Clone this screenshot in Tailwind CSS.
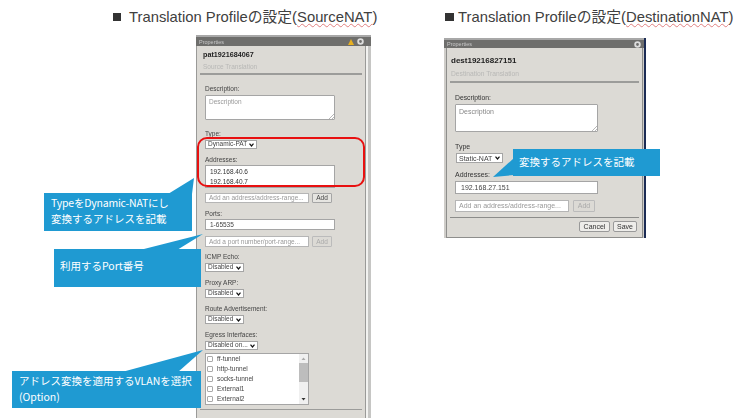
<!DOCTYPE html>
<html lang="ja">
<head>
    <meta charset="UTF-8">
    <title>Translation Profile</title>
    <script src="https://cdn.jsdelivr.net/npm/@tailwindcss/browser@4"></script>
</head>
<body class="bg-white">
<div class="relative w-[750px] h-[418px] overflow-hidden bg-white font-['Liberation_Sans','Noto_Sans_CJK_JP',sans-serif]">

    <!-- slide headings -->
    <h2 class="absolute left-[113px] top-[7px] flex items-center text-[14.8px] leading-[20px] font-normal text-[#404040] whitespace-nowrap">
        <span class="w-[8px] h-[8px] bg-[#333] mr-[8px]"></span>
        <span>Translation Profileの設定(<span class="underline decoration-wavy decoration-[#e08080] decoration-[0.5px]">SourceNAT</span>)</span>
    </h2>
    <h2 class="absolute left-[445px] top-[7px] flex items-center text-[14.8px] leading-[20px] font-normal text-[#404040] whitespace-nowrap">
        <span class="w-[9px] h-[8px] bg-[#333] mr-[4px]"></span>
        <span>Translation Profileの設定(<span class="underline decoration-wavy decoration-[#e08080] decoration-[0.5px]">DestinationNAT</span>)</span>
    </h2>

    <!-- source nat panel -->
    <div class="absolute left-[196px] top-[35px] w-[175px] h-[383px] flex flex-col blur-[0.3px] text-[6.5px] leading-[10px] text-[#444] whitespace-nowrap">
        <div class="h-[11px] shrink-0 border-t-2 border-[#a8a8a8] bg-[#6e6e6c] flex items-center pl-[3px] pr-[7px] text-[5.5px] text-[#c8c8c8]">
            <span class="flex-1">Properties</span>
            <svg class="w-[6px] h-[6px] mr-[3px]" viewBox="0 0 6 6"><path d="M3 0 L6 6 L0 6 Z" fill="#e8b020"/></svg>
            <svg class="w-[7px] h-[7px]" viewBox="0 0 6 6"><circle cx="3" cy="3" r="2" fill="none" stroke="#ddd" stroke-width="1.6"/></svg>
        </div>
        <div class="flex flex-1 min-h-0">
            <div class="w-[170px] h-full bg-[#dcdad5] border-x border-[#9a9a98] overflow-hidden">
                <div class="px-[3px]">
                    <div class="pl-[3px] mt-[4px] h-[10px] text-[7.2px] font-bold text-[#222]">pat1921684067</div>
                    <div class="pl-[3px] mt-[2px] h-[10px] text-[#b8b8b6]">Source Translation</div>
                    <div class="mt-[1px] h-[2px] bg-[#9c9c9a]"></div>
                </div>
                <div class="pl-[8px]">
                    <div class="mt-[9px] h-[10px]">Description:</div>
                    <div class="relative mt-[1px] w-[130px] h-[25px] bg-white border border-[#a5a5a5] rounded-[1px] px-[3px] pt-[1px] text-[#999]">
                        Description
                        <svg class="absolute right-0 bottom-0 w-[5px] h-[5px]" viewBox="0 0 5 5"><path d="M0 5 L5 0 M3 5 L5 3" stroke="#888" stroke-width="0.6"/></svg>
                    </div>
                    <div class="mt-[9px] h-[10px]">Type:</div>
                    <div class="mt-[1px] w-[52px] h-[9px] bg-white border border-[#a5a5a5] flex items-center justify-between px-[2px] leading-none">Dynamic-PAT
                        <svg class="w-[5px] h-[4px]" viewBox="0 0 5 4"><path d="M0.5 0.7 L2.5 3 L4.5 0.7" fill="none" stroke="#111" stroke-width="1.2"/></svg>
                    </div>
                    <div class="mt-[6px] h-[10px]">Addresses:</div>
                    <div class="w-[130px] h-[23px] bg-white border border-[#a5a5a5] pl-[4px] pt-[1px] text-[#333]">
                        <div>192.168.40.6</div>
                        <div>192.168.40.7</div>
                    </div>
                    <div class="mt-[5px] flex gap-[3px]">
                        <div class="w-[104px] h-[10px] bg-white border border-[#b5b5b5] px-[3px] leading-[8px] text-[#999]">Add an address/address-range...</div>
                        <div class="w-[20px] h-[10px] bg-[#e6e5e1] border border-[#a5a5a5] rounded-[1px] text-center leading-[8px]">Add</div>
                    </div>
                    <div class="mt-[6px] h-[10px]">Ports:</div>
                    <div class="w-[130px] h-[11px] bg-white border border-[#a5a5a5] px-[4px] leading-[9px]">1-65535</div>
                    <div class="mt-[6px] flex gap-[3px]">
                        <div class="w-[104px] h-[11px] bg-white border border-[#b5b5b5] px-[3px] leading-[9px] text-[#999]">Add a port number/port-range...</div>
                        <div class="w-[20px] h-[11px] bg-[#dcdad5] border border-[#bbb] rounded-[1px] text-center leading-[9px] text-[#aaa]">Add</div>
                    </div>
                    <div class="mt-[5px] h-[10px]">ICMP Echo:</div>
                    <div class="mt-[1px] w-[39px] h-[9px] bg-white border border-[#a5a5a5] flex items-center justify-between px-[2px] leading-none">Disabled
                        <svg class="w-[5px] h-[4px]" viewBox="0 0 5 4"><path d="M0.5 0.7 L2.5 3 L4.5 0.7" fill="none" stroke="#111" stroke-width="1.2"/></svg>
                    </div>
                    <div class="mt-[6px] h-[10px]">Proxy ARP:</div>
                    <div class="mt-[1px] w-[39px] h-[9px] bg-white border border-[#a5a5a5] flex items-center justify-between px-[2px] leading-none">Disabled
                        <svg class="w-[5px] h-[4px]" viewBox="0 0 5 4"><path d="M0.5 0.7 L2.5 3 L4.5 0.7" fill="none" stroke="#111" stroke-width="1.2"/></svg>
                    </div>
                    <div class="mt-[6px] h-[10px]">Route Advertisement:</div>
                    <div class="mt-[1px] w-[39px] h-[9px] bg-white border border-[#a5a5a5] flex items-center justify-between px-[2px] leading-none">Disabled
                        <svg class="w-[5px] h-[4px]" viewBox="0 0 5 4"><path d="M0.5 0.7 L2.5 3 L4.5 0.7" fill="none" stroke="#111" stroke-width="1.2"/></svg>
                    </div>
                    <div class="mt-[6px] h-[10px]">Egress Interfaces:</div>
                    <div class="mt-[1px] w-[53px] h-[9px] bg-white border border-[#a5a5a5] flex items-center justify-between px-[2px] leading-none">Disabled on...
                        <svg class="w-[5px] h-[4px]" viewBox="0 0 5 4"><path d="M0.5 0.7 L2.5 3 L4.5 0.7" fill="none" stroke="#111" stroke-width="1.2"/></svg>
                    </div>
                    <div class="mt-[3px] w-[104px] h-[52px] bg-white border border-[#a5a5a5] flex">
                        <div class="flex-1 pl-[1px] flex flex-col">
                            <div class="h-[10.4px] flex items-center gap-[4px]"><span class="w-[6px] h-[6px] border border-[#aaa] rounded-[1px]"></span>ff-tunnel</div>
                            <div class="h-[10.4px] flex items-center gap-[4px]"><span class="w-[6px] h-[6px] border border-[#aaa] rounded-[1px]"></span>http-tunnel</div>
                            <div class="h-[10.4px] flex items-center gap-[4px]"><span class="w-[6px] h-[6px] border border-[#aaa] rounded-[1px]"></span>socks-tunnel</div>
                            <div class="h-[10.4px] flex items-center gap-[4px]"><span class="w-[6px] h-[6px] border border-[#aaa] rounded-[1px]"></span>External1</div>
                            <div class="h-[10.4px] flex items-center gap-[4px]"><span class="w-[6px] h-[6px] border border-[#aaa] rounded-[1px]"></span>External2</div>
                        </div>
                        <div class="w-[9px] bg-[#f0f0f0] flex flex-col items-center">
                            <svg class="w-[5px] h-[9px]" viewBox="0 0 5 9"><path d="M0.5 6 L2.5 3.5 L4.5 6 Z" fill="#aaa"/></svg>
                            <div class="w-full h-[19px] bg-[#bdbdbd]"></div>
                            <div class="flex-1"></div>
                            <svg class="w-[5px] h-[9px]" viewBox="0 0 5 9"><path d="M0.5 3 L2.5 5.5 L4.5 3 Z" fill="#333"/></svg>
                        </div>
                    </div>
                </div>
                <div class="mt-[4px] mx-[3px] h-px bg-[#9c9c9a]"></div>
            </div>
            <div class="w-[2px] h-full bg-[#f2f2f0]"></div>
            <div class="w-[3px] h-full bg-[#c6c6c4]"></div>
        </div>
    </div>

    <!-- destination nat panel -->
    <div class="absolute left-[444px] top-[38px] w-[202px] h-[200px] flex flex-col blur-[0.3px] bg-[#cfcdc9] border-r-2 border-[#1c2c55] text-[7px] leading-[10px] text-[#444] whitespace-nowrap">
        <div class="h-[10px] shrink-0 border-t-2 border-[#a8a8a8] bg-[#6e6e6c] flex items-center justify-between px-[3px] text-[5.5px] text-[#c8c8c8]">
            <span>Properties</span>
            <svg class="w-[7px] h-[7px]" viewBox="0 0 6 6"><circle cx="3" cy="3" r="2" fill="none" stroke="#ddd" stroke-width="1.6"/></svg>
        </div>
        <div class="flex-1 ml-[2px] mr-[1px] bg-[#dcdad5] border-x border-b border-[#8e8e8c]">
            <div class="px-[3px]">
                <div class="pl-[1px] mt-[8px] h-[10px] text-[8px] font-bold text-[#222]">dest19216827151</div>
                <div class="pl-[1px] mt-[3px] h-[10px] text-[6.7px] text-[#b8b8b6]">Destination Translation</div>
                <div class="mt-[2px] h-[2px] bg-[#9c9c9a]"></div>
            </div>
            <div class="pl-[8px]">
                <div class="mt-[10px] h-[10px] text-[6.8px] text-[#333]">Description:</div>
                <div class="relative mt-[1px] w-[143px] h-[28px] bg-white border border-[#a5a5a5] rounded-[1px] px-[3px] pt-[2px] text-[#888]">
                    Description
                    <svg class="absolute right-0 bottom-0 w-[5px] h-[5px]" viewBox="0 0 5 5"><path d="M0 5 L5 0 M3 5 L5 3" stroke="#888" stroke-width="0.6"/></svg>
                </div>
                <div class="mt-[10px] h-[10px] text-[#333]">Type</div>
                <div class="mt-[1px] ml-px w-[47px] h-[10px] bg-white border border-[#a5a5a5] flex items-center justify-between px-[2px] leading-none">Static-NAT
                    <svg class="w-[5px] h-[4px]" viewBox="0 0 5 4"><path d="M0.5 0.7 L2.5 3 L4.5 0.7" fill="none" stroke="#111" stroke-width="1.2"/></svg>
                </div>
                <div class="mt-[7px] h-[10px] text-[#333]">Addresses:</div>
                <div class="mt-px w-[143px] h-[13px] bg-white border border-[#a5a5a5] px-[5px] leading-[11px]">192.168.27.151</div>
                <div class="mt-[6px] flex gap-[4px]">
                    <div class="w-[114px] h-[12px] bg-white border border-[#b5b5b5] px-[3px] leading-[10px] text-[#999]">Add an address/address-range...</div>
                    <div class="w-[22px] h-[12px] bg-[#dcdad5] border border-[#bbb] rounded-[1px] text-center leading-[10px] text-[#aaa]">Add</div>
                </div>
            </div>
            <div class="mt-[5px] mx-[3px] h-px bg-[#8c8c8a]"></div>
            <div class="mt-[3px] mr-[5px] flex justify-end gap-[3px] text-[#333]">
                <div class="w-[31px] h-[11px] bg-[#eeedea] border border-[#999] rounded-[2px] text-center leading-[9px]">Cancel</div>
                <div class="w-[24px] h-[11px] bg-[#eeedea] border border-[#999] rounded-[2px] text-center leading-[9px]">Save</div>
            </div>
        </div>
    </div>

    <!-- red highlight -->
    <div class="absolute left-[197px] top-[137px] w-[168px] h-[50px] border-2 border-[#e81010] rounded-[10px]"></div>

    <!-- callout pointers -->
    <svg class="absolute left-0 top-0 w-[750px] h-[418px]" viewBox="0 0 750 418">
        <path d="M168 194 L194 178 L192 194 Z" fill="#1f9ad2"/>
        <path d="M140 250 L203 234 L177 250 Z" fill="#1f9ad2"/>
        <path d="M122 372 L203 350 L178 372 Z" fill="#1f9ad2"/>
        <path d="M514 158 L493 177 L514 175 Z" fill="#1f9ad2"/>
    </svg>

    <!-- callouts -->
    <div class="absolute left-[44px] top-[193px] w-[148px] h-[38px] bg-[#1f9ad2] text-white text-[10.5px] leading-[16px] px-[7px] pt-[2px] font-['Noto_Sans_CJK_JP',sans-serif] whitespace-nowrap">
        <div class="tracking-[-0.2px]">TypeをDynamic-NATにし</div>
        <div>変換するアドレスを記載</div>
    </div>
    <div class="absolute left-[54px] top-[249px] w-[147px] h-[38px] bg-[#1f9ad2] text-white text-[10.5px] leading-[16px] px-[6px] pt-[9px] font-['Noto_Sans_CJK_JP',sans-serif] whitespace-nowrap">利用するPort番号</div>
    <div class="absolute left-[12px] top-[371px] w-[189px] h-[37px] bg-[#1f9ad2] text-white text-[10.5px] leading-[16px] px-[7px] pt-[2px] font-['Noto_Sans_CJK_JP',sans-serif] whitespace-nowrap">
        <div>アドレス変換を適用するVLANを選択</div>
        <div>(Option)</div>
    </div>
    <div class="absolute left-[513px] top-[149px] w-[147px] h-[27px] bg-[#1f9ad2] text-white text-[10.5px] leading-[26px] px-[6px] font-['Noto_Sans_CJK_JP',sans-serif] whitespace-nowrap">変換するアドレスを記載</div>

</div>
</body>
</html>
